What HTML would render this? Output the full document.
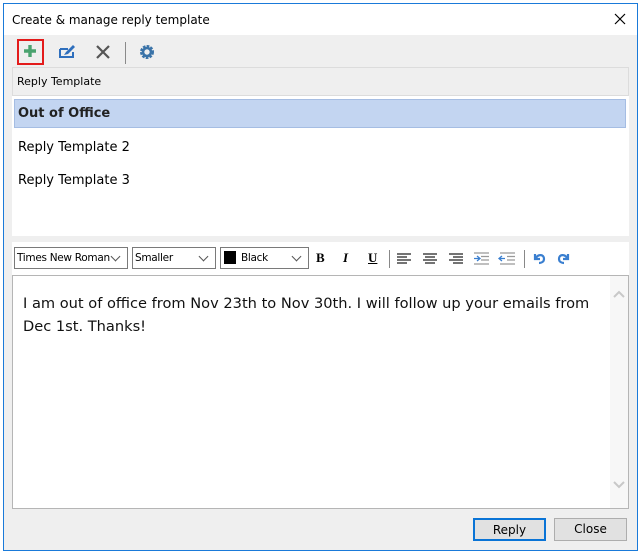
<!DOCTYPE html>
<html><head><style>
*{margin:0;padding:0;box-sizing:border-box}
body{width:643px;height:557px;background:#fff;position:relative;overflow:hidden;font-family:"DejaVu Sans","Liberation Sans",sans-serif;}
.a{position:absolute}
.win{left:3px;top:3px;width:635px;height:548px;border:1px solid #1a7ad9;background:#efefef}
.title{left:4px;top:4px;width:633px;height:31px;background:#fff}
.t{font-size:12px;color:#000;white-space:nowrap}
.sel{background:#fff;border:1px solid #7a7a7a;height:22px;font-size:10.5px;letter-spacing:-0.3px;line-height:20px;padding-left:2px;overflow:hidden;white-space:nowrap}
.sel:after{content:"";position:absolute;right:8px;top:5px;width:6px;height:6px;border-right:1px solid #555;border-bottom:1px solid #555;transform:rotate(45deg)}
.btn{height:23px;font-size:12px;text-align:center;line-height:20px;background:#e1e1e1}
</style></head><body>
<div class="a win"></div>
<div class="a title"></div>
<div class="a t" style="left:12px;top:13px">Create &amp; manage reply template</div>
<svg class="a" style="left:614px;top:13px" width="12" height="12"><path d="M1 1L11 11M11 1L1 11" stroke="#000" stroke-width="1.2"/></svg>

<div class="a" style="left:17px;top:39px;width:27px;height:26px;border:2px solid #e31b1b"></div>
<svg class="a" style="left:23px;top:44px" width="14" height="14"><path d="M7 1V13M1 7H13" stroke="#4aa36f" stroke-width="3.4"/></svg>
<svg class="a" style="left:58px;top:43px" width="18" height="16"><path d="M2 6H10M2 6V14H15V9" stroke="#2f6fbd" stroke-width="2" fill="none"/><path d="M6 12L8 9L15 2L17 4L10 11Z" fill="#2f6fbd"/></svg>
<svg class="a" style="left:95px;top:44px" width="16" height="16"><path d="M2 2L14 14M14 2L2 14" stroke="#555" stroke-width="2.2"/></svg>
<div class="a" style="left:125px;top:42px;width:1px;height:22px;background:#8a8a8a"></div>
<svg class="a" style="left:139px;top:44px" width="16" height="16"><circle cx="8" cy="8" r="5.3" fill="none" stroke="#3a73a8" stroke-width="3.4" stroke-dasharray="2.4 1.1"/><circle cx="8" cy="8" r="4" fill="none" stroke="#3a73a8" stroke-width="2.6"/></svg>

<div class="a" style="left:12px;top:67px;width:617px;height:169px;background:#fff"></div>
<div class="a" style="left:12px;top:67px;width:617px;height:29px;background:#efefef;border:1px solid #dcdcdc"></div>
<div class="a" style="left:17px;top:75px;font-size:11px">Reply Template</div>
<div class="a" style="left:14px;top:99px;width:612px;height:29px;background:#c3d5f1;border:1px solid #a5bde3"></div>
<div class="a t" style="left:18px;top:106px;font-weight:bold;font-size:13px;color:#222">Out of Office</div>
<div class="a t" style="left:18px;top:140px;font-size:13px">Reply Template 2</div>
<div class="a t" style="left:18px;top:173px;font-size:13px">Reply Template 3</div>

<div class="a" style="left:12px;top:242px;width:617px;height:34px;background:#fff"></div>
<div class="a sel" style="left:14px;top:247px;width:114px">Times New Roman</div>
<div class="a sel" style="left:132px;top:247px;width:84px">Smaller</div>
<div class="a sel" style="left:220px;top:247px;width:89px;padding-left:20px">Black</div>
<div class="a" style="left:224px;top:251px;width:12px;height:13px;background:#000"></div>
<div class="a" style="left:316px;top:250px;font-family:'Liberation Serif',serif;font-weight:bold;font-size:13px">B</div>
<div class="a" style="left:343px;top:250px;font-family:'Liberation Serif',serif;font-style:italic;font-weight:bold;font-size:13px">I</div>
<div class="a" style="left:368px;top:250px;font-family:'Liberation Serif',serif;font-weight:bold;font-size:13px;text-decoration:underline">U</div>
<div class="a" style="left:389px;top:250px;width:1px;height:18px;background:#888"></div>
<svg class="a" style="left:397px;top:252px" width="130" height="14">
<g stroke="#222" stroke-width="1.2"><path d="M0 2H14M0 5H10M0 8H14M0 11H10"/><path d="M26 2H40M28 5H38M26 8H40M28 11H38"/><path d="M52 2H66M56 5H66M52 8H66M56 11H66"/></g>
<g stroke="#999" stroke-width="1.2"><path d="M77 1H92M84 4.5H92M84 8H92M77 12H92"/><path d="M103 1H118M110 4.5H118M110 8H118M103 12H118"/></g>
<path d="M77 6.5H82M80 4L83 6.5L80 9" stroke="#3a7fd0" stroke-width="1.3" fill="none"/>
<path d="M108 6.5H103M105 4L102 6.5L105 9" stroke="#3a7fd0" stroke-width="1.3" fill="none"/>
</svg>
<div class="a" style="left:524px;top:250px;width:1px;height:18px;background:#888"></div>
<svg class="a" style="left:532px;top:251px" width="40" height="14"><path d="M3 3V8H8M4 7C6 3 12 3 12 8C12 11 9 12 7 12" stroke="#3a7fd0" stroke-width="2.2" fill="none"/><path d="M36 3V8H31M35 7C33 3 27 3 27 8C27 11 30 12 32 12" stroke="#3a7fd0" stroke-width="2.2" fill="none"/></svg>

<div class="a" style="left:12px;top:275px;width:617px;height:234px;background:#fff;border:1px solid #b5b5b5"></div>
<div class="a" style="left:610px;top:276px;width:18px;height:232px;background:#f7f7f7"></div>
<svg class="a" style="left:613px;top:290px" width="12" height="8"><path d="M1 7L6 2L11 7" stroke="#c8c8c8" stroke-width="2" fill="none"/></svg>
<svg class="a" style="left:613px;top:481px" width="12" height="8"><path d="M1 1L6 6L11 1" stroke="#c8c8c8" stroke-width="2" fill="none"/></svg>
<div class="a" style="left:23px;top:292px;width:585px;font-size:14.6px;line-height:23px;color:#111">I am out of office from Nov 23th to Nov 30th. I will follow up your emails from Dec 1st. Thanks!</div>

<div class="a btn" style="left:473px;top:518px;width:73px;border:2px solid #0a74d6">Reply</div>
<div class="a btn" style="left:554px;top:518px;width:73px;border:1px solid #adadad;line-height:21px">Close</div>
</body></html>
